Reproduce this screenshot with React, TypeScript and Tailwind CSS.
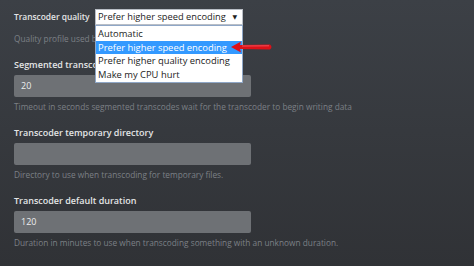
import React from 'react';

const QUALITY_OPTIONS = [
  'Automatic',
  'Prefer higher speed encoding',
  'Prefer higher quality encoding',
  'Make my CPU hurt',
];

function Field({ label, value, help }: { label: string; value: string; help: string }) {
  return (
    <div className="flex flex-col pt-[12px]">
      <div className="text-[9px] leading-[14px] font-semibold text-[#e4e5e6] whitespace-nowrap">{label}</div>
      <div className="mt-[3px] w-[237px] h-[22px] rounded-[2px] bg-[#6e7175] px-[7px] flex items-center text-[9px] text-[#eceded]">
        {value}
      </div>
      <div className="mt-[3px] text-[8.3px] leading-[14px] text-[#7c8086] whitespace-nowrap">{help}</div>
    </div>
  );
}

function Arrow() {
  return (
    <svg width="44" height="14" viewBox="0 0 44 14" className="absolute left-[230px] top-[40px]">
      <path d="M1 7 L11 1.5 L10 5 L40 4.5 Q43 7 40 9.5 L10 9 L11 12.5 Z" fill="#dd1118" />
      <path d="M12 6 L39 5.8" stroke="#f0505a" strokeWidth="1" />
    </svg>
  );
}

export default function App() {
  return (
    <div
      className="relative w-[474px] h-[266px] overflow-hidden bg-gradient-to-b from-[#3c4046] to-[#303236] px-[14px] pt-[9px]"
      style={{ fontFamily: '"Open Sans", "DejaVu Sans", sans-serif' }}
    >
      <div className="flex items-center h-[16px]">
        <div className="w-[81px] flex-none whitespace-nowrap text-[8.4px] font-semibold text-[#e4e5e6]">Transcoder quality</div>
        <div className="w-[148px] flex-none h-[16px] bg-white border border-[#b9bec6] flex items-center justify-between pl-[2px] pr-[5px] text-[9.3px] text-[#1d1d1d] whitespace-nowrap">
          <span>Prefer higher speed encoding</span>
          <span className="text-[6px]">▼</span>
        </div>
      </div>
      <div className="mt-[7px] text-[8.3px] leading-[14px] text-[#7c8086] whitespace-nowrap">Quality profile used by the transcoder.</div>

      <Field
        label="Segmented transcoder timeout"
        value="20"
        help="Timeout in seconds segmented transcodes wait for the transcoder to begin writing data"
      />
      <Field
        label="Transcoder temporary directory"
        value=""
        help="Directory to use when transcoding for temporary files."
      />
      <Field
        label="Transcoder default duration"
        value="120"
        help="Duration in minutes to use when transcoding something with an unknown duration."
      />

      <div className="absolute left-[95px] top-[25px] w-[148px] bg-white border border-[#8fa7c7] text-[9.4px] leading-[13.5px] text-[#1d1d1d] py-[1px] whitespace-nowrap">
        {QUALITY_OPTIONS.map((o, i) => (
          <div key={o} className={i === 1 ? 'bg-[#3399ff] text-white px-[2px]' : 'px-[2px]'}>
            {o}
          </div>
        ))}
      </div>
      <Arrow />
    </div>
  );
}
